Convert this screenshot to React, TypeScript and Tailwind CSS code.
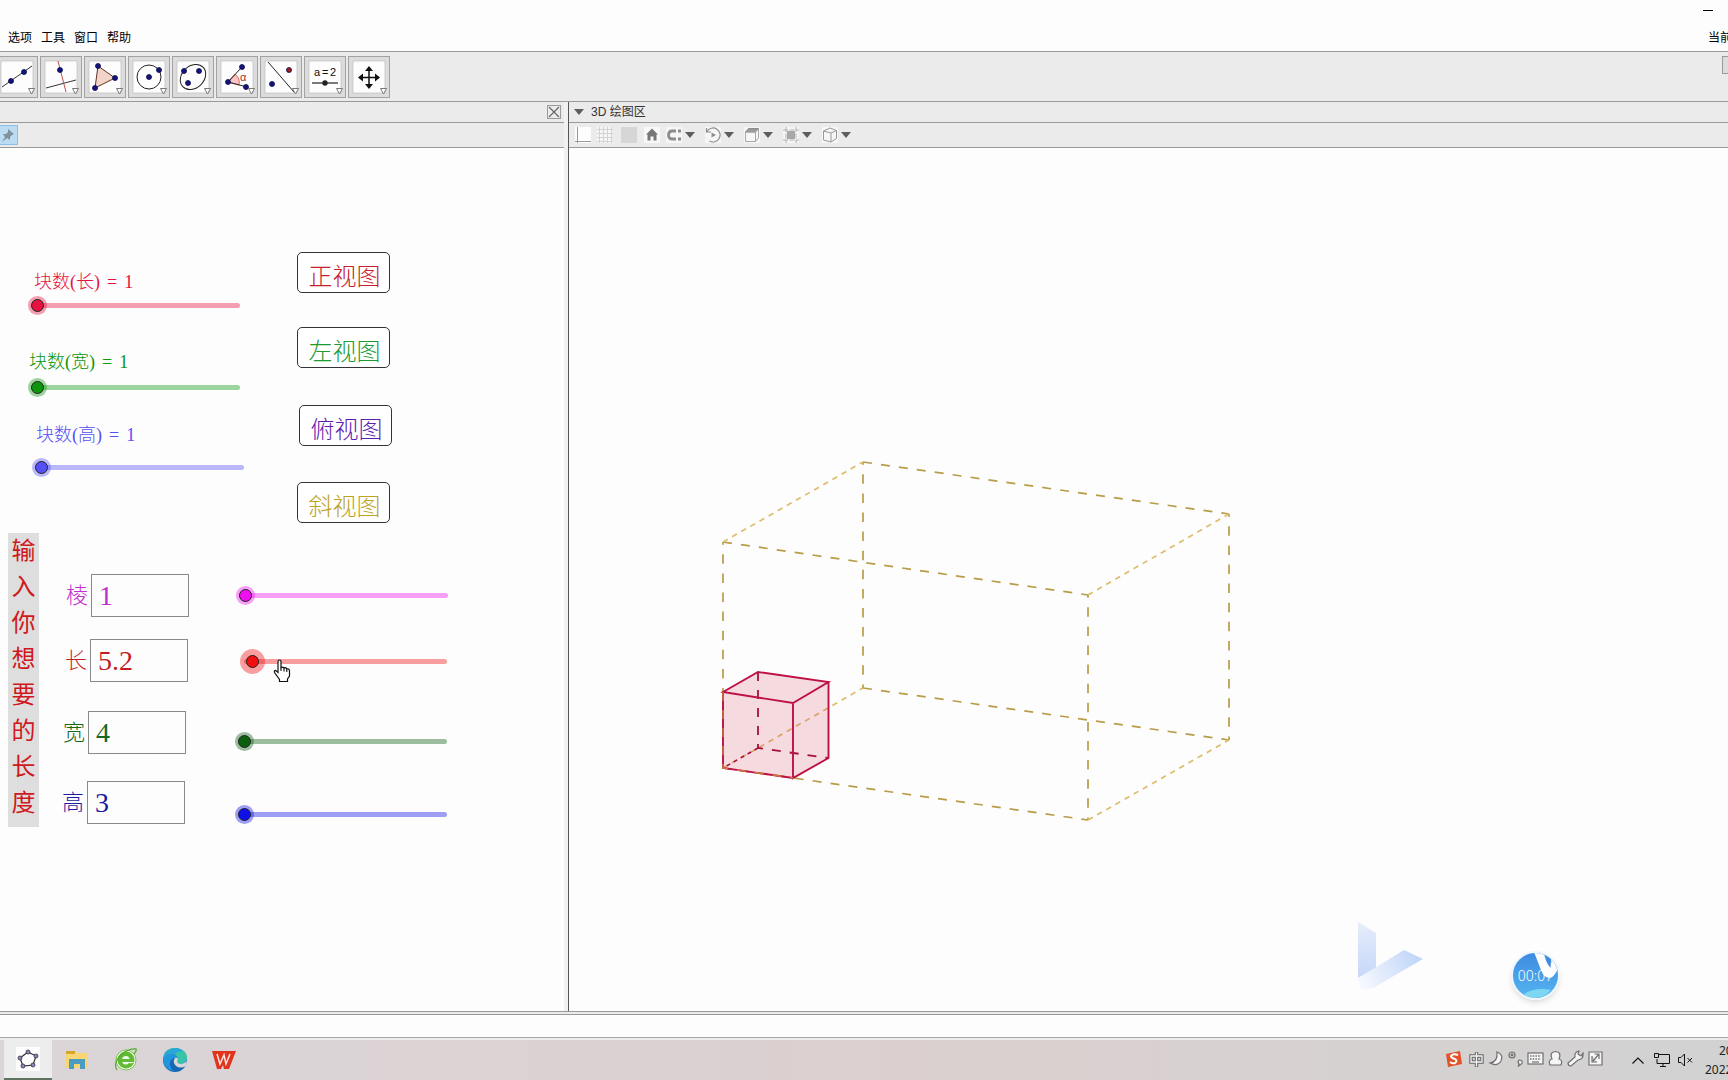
import type { ReactNode } from 'react';

const MENUS = ['选项', '工具', '窗口', '帮助'];

const counters = [
  { name: '长', color: 'text-[#e6123f]', label: 'left-[34px] top-[122px]', slider: 'left-[31px] top-[147px] w-[209px]' },
  { name: '宽', color: 'text-[#0c960c]', label: 'left-[29px] top-[202px]', slider: 'left-[31px] top-[229px] w-[209px]' },
  { name: '高', color: 'text-[#5550f5]', label: 'left-[36px] top-[275px]', slider: 'left-[35px] top-[309px] w-[209px]' },
];

const views = [
  { name: '正视图', color: 'text-[#c8202c]', place: 'left-[297px] top-[104px]' },
  { name: '左视图', color: 'text-[#1d9a30]', place: 'left-[297px] top-[179px]' },
  { name: '俯视图', color: 'text-[#5f1fae]', place: 'left-[299px] top-[257px]' },
  { name: '斜视图', color: 'text-[#bda324]', place: 'left-[297px] top-[334px]' },
];

const sizes = [
  { name: '棱', value: '1', color: 'text-[#c030cc]', knob: 'text-[#ee10ee]', row: 'left-[66px] top-[426px]', slider: 'left-[239px] top-[437px] w-[209px]', min: 1, max: 6 },
  { name: '长', value: '5.2', color: 'text-[#c41c24]', knob: 'text-[#f01010]', row: 'left-[65px] top-[491px]', slider: 'left-[244px] top-[503px] w-[203px]', min: 5, max: 25, active: true },
  { name: '宽', value: '4', color: 'text-[#14691c]', knob: 'text-[#0a600f]', row: 'left-[63px] top-[563px]', slider: 'left-[238px] top-[583px] w-[209px]', min: 4, max: 9 },
  { name: '高', value: '3', color: 'text-[#1c1ca0]', knob: 'text-[#1010e8]', row: 'left-[62px] top-[633px]', slider: 'left-[238px] top-[656px] w-[209px]', min: 3, max: 8 },
];

function Dot({ x, y, fill = '#14147a' }: { x: number; y: number; fill?: string }) {
  return <circle cx={x} cy={y} r="2.5" fill={fill} stroke="#080850" strokeWidth="0.8" />;
}

const tools: { name: string; icon: ReactNode }[] = [
  {
    name: '直线',
    icon: (
      <>
        <path d="M1 26L31 5" stroke="#333" />
        <Dot x={10} y={20} />
        <Dot x={23} y={11} />
      </>
    ),
  },
  {
    name: '垂线',
    icon: (
      <>
        <path d="M1 27L31 19" stroke="#333" />
        <path d="M13 0L21 31" stroke="#c0504d" />
        <Dot x={15} y={9} />
      </>
    ),
  },
  {
    name: '多边形',
    icon: (
      <>
        <path d="M9 5L26 17L6 27Z" fill="#f2d5c8" stroke="#5c3327" />
        <Dot x={9} y={5} />
        <Dot x={26} y={17} />
        <Dot x={6} y={27} />
      </>
    ),
  },
  {
    name: '圆',
    icon: (
      <>
        <circle cx="16" cy="16" r="12" stroke="#222" />
        <Dot x={16} y={16} />
        <Dot x={26} y={9} />
      </>
    ),
  },
  {
    name: '圆锥曲线',
    icon: (
      <>
        <ellipse cx="16" cy="16" rx="14" ry="11" transform="rotate(-43 16 16)" stroke="#222" />
        <Dot x={7} y={10} />
        <Dot x={22} y={10} />
        <Dot x={11} y={22} />
      </>
    ),
  },
  {
    name: '角度',
    icon: (
      <>
        <path d="M7 21L14 13A11 11 0 0 1 18 24Z" fill="#fbc4c4" stroke="#c0504d" strokeWidth="0.8" />
        <path d="M21 6L7 21L26 26" stroke="#222" />
        <Dot x={21} y={6} />
        <Dot x={7} y={21} />
        <Dot x={25} y={26} />
        <text x="19" y="20" fontSize="11" fill="#b03030" fontFamily="Liberation Sans">α</text>
      </>
    ),
  },
  {
    name: '轴对称',
    icon: (
      <>
        <path d="M3 1L29 31" stroke="#222" />
        <Dot x={7} y={23} />
        <Dot x={24} y={9} fill="#a01c1c" />
      </>
    ),
  },
  {
    name: '滑动条',
    icon: (
      <>
        <text x="5" y="15" fontSize="11" fill="#111" fontFamily="Liberation Sans">a</text>
        <text x="13" y="15" fontSize="11" fill="#111" fontFamily="Liberation Sans">=</text>
        <text x="21" y="15" fontSize="11" fill="#111" fontFamily="Liberation Sans">2</text>
        <path d="M3 22H29" stroke="#333" strokeWidth="1.300" />
        <circle cx="16" cy="22" r="2.700" fill="#222" />
      </>
    ),
  },
  {
    name: '移动视图',
    icon: (
      <>
        <path d="M16 7V26M7 16.500H26" stroke="#111" strokeWidth="1.500" />
        <path d="M16 5L20 10H12ZM16 28L20 23H12ZM5 16.500L10 12.500V20.500ZM27 16.500L22 12.500V20.500Z" fill="#111" />
      </>
    ),
  },
];

function ToolButton({ name, icon }: { name: string; icon: ReactNode }) {
  return (
    <button aria-label={name} className="flex size-[42px] shrink-0 items-center justify-center border border-[#a2a2a2] bg-[#dcdcdc]">
      <svg viewBox="0 0 40 40" className="size-10" fill="none">
        <rect x="4" y="4" width="32" height="32" fill="#fdfdfd" stroke="#c4c4c4" strokeWidth="0.8" />
        <g transform="translate(4 4)">{icon}</g>
        <path d="M31.500 31.500H37.500L34.500 37Z" fill="#fff" stroke="#777" strokeWidth="1" />
      </svg>
    </button>
  );
}

type SliderProps = { label: string; place: string; color: string; min: number; max: number; value: number; active?: boolean };

function Slider({ label, place, color, min, max, value, active }: SliderProps) {
  return (
    <input
      type="range"
      aria-label={label}
      min={min}
      max={max}
      step={0.1}
      defaultValue={value}
      className={`absolute h-5 appearance-none bg-transparent [&::-webkit-slider-runnable-track]:h-[5px] [&::-webkit-slider-runnable-track]:rounded-full [&::-webkit-slider-runnable-track]:bg-current/40 [&::-webkit-slider-thumb]:-mt-1 [&::-webkit-slider-thumb]:size-[13px] [&::-webkit-slider-thumb]:appearance-none [&::-webkit-slider-thumb]:rounded-full [&::-webkit-slider-thumb]:border [&::-webkit-slider-thumb]:border-[#222] [&::-webkit-slider-thumb]:bg-current ${
        active
          ? '[&::-webkit-slider-thumb]:ring-6 [&::-webkit-slider-thumb]:ring-current/40'
          : '[&::-webkit-slider-thumb]:ring-3 [&::-webkit-slider-thumb]:ring-current/40'
      } ${place} ${color}`}
    />
  );
}

function HandCursor() {
  return (
    <svg className="pointer-events-none absolute left-[273px] top-[511px] h-[24px] w-[18px]" viewBox="0 0 18 24">
      <path
        d="M5 2.500Q5 1 6.500 1T8 2.500V8.500Q9.500 7.500 11 9Q12.500 8 13.800 9.800Q16.500 9.500 16.500 12V17L14.500 20V22.500H6.500V20.500L1.500 13.500Q1 11.500 2.500 11.300L5 13.500Z"
        fill="#fff"
        stroke="#111"
        strokeWidth="1.200"
      />
      <path d="M8 8.500V12M11 9V12.500M13.800 10V13" stroke="#111" strokeWidth="1.100" />
    </svg>
  );
}

function GraphicsView() {
  return (
    <div className="relative flex-1 overflow-hidden font-['Liberation_Serif','Noto_Sans_CJK_SC',serif] font-light">
      {counters.map((c) => (
        <div key={c.name}>
          <p className={`absolute whitespace-nowrap text-lg leading-6 ${c.label} ${c.color}`}>
            块数({c.name})<span className="px-[7px]">=</span>1
          </p>
          <Slider label={`块数(${c.name})`} place={c.slider} color={c.color} min={1} max={6} value={1} />
        </div>
      ))}

      {views.map((v) => (
        <button
          key={v.name}
          className={`absolute h-[41px] w-[93px] rounded-[5px] border border-[#333] bg-white pl-[2px] pt-2 text-2xl leading-8 ${v.place} ${v.color}`}
        >
          {v.name}
        </button>
      ))}

      <p className="absolute left-2 top-[385px] w-[31px] bg-[#dedede] pb-[6px] text-center text-2xl leading-9 font-normal text-[#d01820]">
        输入你想要的长度
      </p>

      {sizes.map((s) => (
        <div key={s.name}>
          <label className={`absolute flex items-center gap-[3px] text-[22px] leading-8 ${s.row} ${s.color}`}>
            {s.name}
            <input defaultValue={s.value} className="h-[43px] w-[98px] border border-[#8a8a8a] bg-[#fdfdfd] px-[7px] text-[28px]" />
          </label>
          <Slider label={s.name} place={s.slider} color={s.knob} min={s.min} max={s.max} value={Number(s.value)} active={s.active} />
        </div>
      ))}
      <HandCursor />
    </div>
  );
}

function Caret() {
  return (
    <svg viewBox="0 0 10 6" className="h-[6px] w-[10px]">
      <path d="M0 0H10L5 6Z" fill="#5e5e5e" />
    </svg>
  );
}

const viewTools: { name: string; icon: ReactNode }[] = [
  {
    name: '捕捉',
    icon: <path d="M10 4H6Q2.500 4 2.500 8T6 12H10M12 4H15M12 12H15" stroke="#8c8c8c" strokeWidth="2.800" />,
  },
  {
    name: '旋转',
    icon: (
      <>
        <path d="M2 4.500A7 7 0 1 1 4.500 14M1.500 1V5H6" stroke="#8c8c8c" strokeWidth="1.200" />
        <path d="M6.500 5.500L11 8L6.500 10.500Z" fill="#8c8c8c" />
      </>
    ),
  },
  {
    name: '视角',
    icon: (
      <>
        <path d="M1.500 5L4.500 1.500H14.500L11.500 5Z" fill="#9a9a9a" stroke="#8c8c8c" />
        <path d="M1.500 5H11.500V14.500H1.500ZM11.500 14.500L14.500 11V1.500" stroke="#a8a8a8" />
      </>
    ),
  },
  {
    name: '裁剪',
    icon: (
      <>
        <rect x="4" y="4" width="8" height="8" fill="#a8a8a8" />
        <path d="M0 3H16M0 13H16M3 0V16M13 0V16" stroke="#b0b0b0" strokeDasharray="5 1.500" />
      </>
    ),
  },
  {
    name: '投影',
    icon: (
      <path d="M1.500 4L8 1L14.500 3.500V11.500L9 15L1.500 13ZM1.500 4L9 6V15M9 6L14.500 3.500" stroke="#999" />
    ),
  },
];

function ViewHeader() {
  return (
    <>
      <div className="flex h-[21px] items-center gap-[7px] border-b border-[#9a9a9a] bg-[#ebebeb] pl-[5px] text-xs text-[#333]">
        <Caret />
        <span>3D 绘图区</span>
      </div>
      <div className="flex h-[25px] items-center border-b border-[#9a9a9a] bg-[#ebebeb] pl-[6px]">
        <button aria-label="坐标轴">
          <svg viewBox="0 0 16 16" className="size-4" fill="none">
            <rect width="16" height="16" fill="#fdfdfd" />
            <path d="M2.500 0V16M0 14.500H16" stroke="#999" />
          </svg>
        </button>
        <button aria-label="网格" className="ml-[6px]">
          <svg viewBox="0 0 16 16" className="size-4" fill="none">
            <rect width="16" height="16" fill="#f6f6f6" />
            <path d="M2.500 0V16M6.500 0V16M10.500 0V16M14.500 0V16M0 2.500H16M0 6.500H16M0 10.500H16M0 14.500H16" stroke="#d2d2d2" />
          </svg>
        </button>
        <button aria-label="平面" className="ml-2 size-4 bg-[#d6d6d6]" />
        <button aria-label="主视图" className="ml-[7px]">
          <svg viewBox="0 0 16 16" className="size-4">
            <rect width="16" height="16" fill="#f8f8f8" />
            <path d="M8 1.500L14 7.500H12.500V13.500H9.500V9.500H6.500V13.500H3.500V7.500H2Z" fill="#777" />
          </svg>
        </button>
        <div className="ml-[6px] flex gap-[10px]">
          {viewTools.map((t) => (
            <button key={t.name} aria-label={t.name} className="flex items-center gap-[3px]">
              <svg viewBox="0 0 16 16" className="size-4" fill="none">
                <rect width="16" height="16" fill="#f6f6f6" />
                {t.icon}
              </svg>
              <Caret />
            </button>
          ))}
        </div>
      </div>
    </>
  );
}

function Solids() {
  return (
    <svg className="absolute inset-0 size-full" fill="none">
      <g transform="translate(-569 -148)">
        {/* outer box */}
        <g stroke="#b89c48" strokeWidth="1.700">
          <path d="M863 462L1229 514M723 542L1088 595M863 688L1229 740M723 768L1088 820" strokeDasharray="9 9.100" />
          <path d="M863 462V688M1229 514V740M723 542V768M1088 595V820" strokeDasharray="9.500 9.600" strokeDashoffset="6.800" />
        </g>
        <path
          d="M723 542L863 462M1088 595L1229 514M723 768L863 688M1088 820L1229 740"
          stroke="#dcbd6c"
          strokeWidth="1.700"
          strokeDasharray="5.500 5"
        />
        {/* unit cube */}
        <path d="M723 692L758 672L828.500 682V758L793 778L723 768Z" fill="#c8143c" fillOpacity="0.150" />
        <path d="M758 672V748L828.500 758" stroke="#a8103c" strokeWidth="1.800" strokeDasharray="9 9" />
        <path d="M758 748L723 768" stroke="#a8103c" strokeWidth="1.600" strokeDasharray="4 4" />
        <path d="M723 692L758 672L828.500 682L793 703ZM828.500 682V758L793 778V703M723 692V768L793 778" stroke="#be1045" strokeWidth="1.900" />
        <path d="M723 692V768L793 778" stroke="#c87840" strokeWidth="1.500" strokeDasharray="9 9" />
      </g>
    </svg>
  );
}

function Watermark() {
  return (
    <svg className="absolute bottom-5 right-[300px] h-[72px] w-[70px]" viewBox="0 0 70 72">
      <defs>
        <linearGradient id="bar" x1="0" y1="0" x2="0" y2="1">
          <stop offset="0" stopColor="#e6edfc" />
          <stop offset="1" stopColor="#c6d7f7" />
        </linearGradient>
        <linearGradient id="arm" gradientUnits="userSpaceOnUse" x1="0" y1="66" x2="60" y2="36">
          <stop offset="0" stopColor="#f8faff" />
          <stop offset="0.5" stopColor="#dde8fc" />
          <stop offset="1" stopColor="#c0d5f8" />
        </linearGradient>
      </defs>
      <path d="M0 3L18 14V49L0 59Z" fill="url(#bar)" />
      <path d="M0 59L46 31L65 40L15 69Q0 74 0 62Z" fill="url(#arm)" />
    </svg>
  );
}

function RecordTimer() {
  return (
    <div className="absolute bottom-[11px] right-[168px] flex size-[49px] items-center justify-center overflow-hidden rounded-full border-2 border-[#eef6fd] bg-linear-to-b from-[#3f8be0] to-[#56b4f0] text-sm text-white shadow-md">
      <span className="font-['Noto_Sans','Noto_Sans_CJK_SC',sans-serif] font-light">00:07</span>
      <svg className="absolute inset-0 size-full" viewBox="0 0 45 45" fill="none">
        <path d="M11 41Q22 34 38 37Q31 45 22 45Q15 45 11 41Z" fill="#7fd6f2" />
        <path d="M21 -1L28 17Q31 25 37 25Q42 24 46 13V-1H37L38.500 10L31.500 3V-1Z" fill="#fdfdfd" />
        <path d="M31.500 2L38 7L37.500 15Q33 10 31.500 2Z" fill="#3f8be0" />
      </svg>
    </div>
  );
}

function TaskIcons() {
  return (
    <div className="flex h-full items-center pl-1">
      <button aria-label="GeoGebra" className="flex h-full w-12 items-center justify-center border-b-2 border-[#5f7360] bg-[#ededed]">
        <svg viewBox="0 0 24 24" className="size-6">
          <rect width="24" height="24" fill="#fdfdfd" />
          <path d="M12 5L20 9L17 18L7 19L4 11Z" fill="none" stroke="#333" strokeWidth="1.200" />
          <g fill="#8888cc" stroke="#333" strokeWidth="0.8">
            <circle cx="12" cy="5" r="2" />
            <circle cx="20" cy="9" r="2" />
            <circle cx="17" cy="18" r="2" />
            <circle cx="7" cy="19" r="2" />
            <circle cx="4" cy="11" r="2" />
          </g>
        </svg>
      </button>
      <button aria-label="文件资源管理器" className="ml-[13px]">
        <svg viewBox="0 0 24 20" className="h-5 w-6">
          <path d="M1 1H10L12 3H22V18H1Z" fill="#f8d673" />
          <path d="M1 1H10V4H1Z" fill="#d7a52c" />
          <path d="M4 19V9H20V19H15V14H9V19Z" fill="#4a9cc0" />
        </svg>
      </button>
      <button aria-label="浏览器" className="ml-[25px]">
        <svg viewBox="0 0 24 24" className="size-6" fill="none">
          <circle cx="12" cy="12" r="10" fill="#f4fbee" stroke="#7cc552" />
          <circle cx="12" cy="12" r="8.500" fill="#62bb33" />
          <path d="M8 11Q9 8 12 8Q15 8 15.500 11ZM8 14H20Q18 16 15 15Q13 17 11 16.500Q9 16 8 14Z" fill="#f4fbee" />
          <path d="M3 22Q-1 16 6 8Q14 0 22 1Q23 3 20 6" stroke="#58ad30" strokeWidth="1.300" />
        </svg>
      </button>
      <button aria-label="Edge" className="ml-[25px]">
        <svg viewBox="0 0 24 24" className="size-6">
          <circle cx="12" cy="12" r="12" fill="#1668b4" />
          <path d="M0 11Q1 0 12 0Q24 1 24 10Q24 15 18 16Q14 16 14 14Q16 12 14 9Q11 5 6 6Q2 7 0 11Z" fill="#37c4a8" />
          <path d="M0 12Q1 1 12 0Q17 0 20 3Q15 3 12 6Q5 5 0 12Z" fill="#2aa6d8" />
          <path d="M0 12Q2 5 9 6Q15 7 15 12Q12 8 8 12Q5 17 10 23Q1 21 0 12Z" fill="#2196dc" />
          <path d="M12 10Q16 9 14.500 13Q14 16 18 16Q21 16 24 13L23 18Q17 21 13 18Q9 14 12 10Z" fill="#d9d5d8" />
        </svg>
      </button>
      <button aria-label="WPS" className="ml-[25px]">
        <svg viewBox="0 0 24 20" className="h-5 w-6">
          <path d="M0 1H24L17 19H12L11 15L9 19H5Z" fill="#e2341d" />
          <path d="M5 4L8 14L12 5L14 14L18 4" fill="none" stroke="#f8e4e0" strokeWidth="1.500" />
        </svg>
      </button>
    </div>
  );
}

function Tray() {
  return (
    <div className="flex h-full items-center">
      <svg viewBox="0 0 162 20" className="mb-[3px] h-5 w-[162px]" fill="none">
        <path d="M1 5L15 2L17 15L3 18Z" fill="#e2532b" />
        <path d="M13 6Q8 4 6 7Q6 9 10 10Q13 12 10 14Q8 15 5 13" stroke="#fff" strokeWidth="2" />
        <path d="M26 7H37V13H26ZM31.500 3V18" stroke="#666" strokeWidth="3.400" />
        <path d="M26 7H37V13H26ZM31.500 3.500V17.500" stroke="#f5f5f5" strokeWidth="1.300" />
        <g stroke="#6f6f6f" strokeWidth="1.200">
          <path d="M52 3Q59 6 56 12Q52 18 45 14Q53 13 52 3Z" fill="#f5f5f5" />
          <circle cx="67" cy="6" r="3" />
          <circle cx="67" cy="6" r="0.8" />
          <path d="M74 11Q78 11 77 14.500L73 17.500Q75 15 73 13Z" fill="#f5f5f5" />
          <rect x="83" y="4" width="15" height="11" fill="#f5f5f5" />
          <path d="M85 7H96M85 10H96" strokeDasharray="1.500 1.200" strokeWidth="1.500" />
          <path d="M87 13H94" />
          <path d="M105 16Q103 11 107 10Q104 3 110.500 2.500Q117 3 114 10Q118 11 116 16Z" fill="#f5f5f5" />
          <path d="M123 14L130 8Q129 3 134 2L133 5L136 7L138 4Q139 10 133 11L126 17Q123 17 123 14Z" fill="#f5f5f5" />
          <path d="M144 3H157V16H144ZM148 12L154 5M149.500 5H154V10M147 7V13H152" fill="#f5f5f5" />
        </g>
      </svg>
      <svg viewBox="0 0 12 7" className="ml-[25px] h-[7px] w-3" fill="none">
        <path d="M0.500 6.500L6 1L11.500 6.500" stroke="#111" strokeWidth="1.200" />
      </svg>
      <svg viewBox="0 0 16 14" className="ml-[10px] h-[14px] w-4" fill="none" stroke="#111">
        <path d="M5 1.500H15.500V10.500H3V6M9 10.500V13.500M6 13.500H12M0.500 0.500H4.500V4.500H0.500Z" />
      </svg>
      <svg viewBox="0 0 16 14" className="ml-2 h-[14px] w-4" fill="none" stroke="#111">
        <path d="M0.500 4.500H3L6.500 1V13L3 9.500H0.500ZM9.500 5L14 9.500M14 5L9.500 9.500" />
      </svg>
      <div className="ml-[11px] w-[23px] overflow-hidden whitespace-nowrap font-['Noto_Sans','Noto_Sans_CJK_SC',sans-serif] text-xs leading-[19px] text-[#222]">
        <p className="pl-[14px]">20:16</p>
        <p>2022/3/9</p>
      </div>
    </div>
  );
}

export default function App() {
  return (
    <div className="flex min-h-screen flex-col overflow-hidden bg-[#fdfdfd] font-['Liberation_Sans','Noto_Sans_CJK_SC',sans-serif] text-black">
      <header>
        <div className="flex h-6 items-start justify-end pr-[15px] pt-[10px]">
          <button aria-label="最小化" className="h-px w-[10px] bg-black" />
        </div>
        <nav className="flex h-[27px] items-center gap-[9px] overflow-hidden pl-2 text-xs">
          {MENUS.map((m) => (
            <button key={m}>{m}</button>
          ))}
          <span className="ml-auto w-5 whitespace-nowrap">当前</span>
        </nav>
      </header>

      <div className="flex h-[51px] items-center justify-between overflow-hidden border-y border-[#9a9a9a] bg-[#ebebeb]">
        <div className="-ml-1 flex gap-[2px]">
          {tools.map((t) => (
            <ToolButton key={t.name} {...t} />
          ))}
        </div>
        <button aria-label="撤销" className="mb-6 h-[18px] w-[6px] border border-r-0 border-[#9a9a9a] bg-[#dcdcdc]" />
      </div>

      <main className="flex flex-1">
        <section className="flex w-[564px] shrink-0 flex-col">
          <div className="flex h-[21px] items-center justify-end border-b border-[#9a9a9a] bg-[#ebebeb] pr-[3px]">
            <button aria-label="关闭" className="border border-[#9a9a9a]">
              <svg viewBox="0 0 12 12" className="size-3">
                <path d="M1 1L11 11M11 1L1 11" stroke="#666" strokeWidth="1.200" />
              </svg>
            </button>
          </div>
          <div className="flex h-[25px] items-center border-b border-[#9a9a9a] bg-[#ebebeb]">
            <button aria-label="固定" className="flex h-5 w-[18px] items-center border border-l-0 border-[#8dbfe6] bg-[#bcdcf4]">
              <svg viewBox="0 0 16 16" className="size-4">
                <path d="M8 2L14 7L12 8L10 10V13L7 11L2 15L5 10L3 7H6L8 5Z" fill="#7f929f" />
              </svg>
            </button>
          </div>
          <GraphicsView />
        </section>

        <div className="w-[5px] shrink-0 border-r border-[#555] bg-[#f1f1f1]" />

        <section className="flex min-w-0 flex-1 flex-col">
          <ViewHeader />
          <div className="relative flex-1">
            <Solids />
            <Watermark />
            <RecordTimer />
          </div>
        </section>
      </main>

      <div className="h-1 border-y border-[#9a9a9a] bg-[#ebebeb]" />
      <input aria-label="输入" className="h-[23px] w-full border-b border-[#a8a8a8] bg-[#fdfdfd] px-2 text-xs" />
      <footer className="flex h-[42px] items-center justify-between overflow-hidden border-t-2 border-[#ececec] bg-linear-to-r from-[#dad5d8] via-[#dcd0d0] to-[#d2d2d2]">
        <TaskIcons />
        <Tray />
      </footer>
    </div>
  );
}
